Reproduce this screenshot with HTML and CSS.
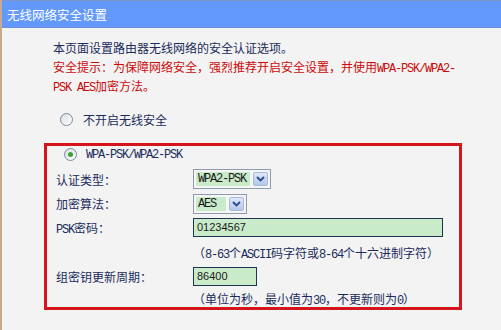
FILE: index.html
```html
<!DOCTYPE html>
<html lang="zh-CN">
<head>
    <meta charset="UTF-8">
    <title>无线网络安全设置</title>
    <link rel="stylesheet" href="styles.css">
</head>
<body>
    <div class="page">
        <div class="title-bar">无线网络安全设置</div>

        <div class="content">
            <p class="intro">本页面设置路由器无线网络的安全认证选项。</p>
            <p class="warning">安全提示：为保障网络安全，强烈推荐开启安全设置，并使用<span class="mono">WPA-PSK/WPA2-</span><br><span class="mono">PSK AES</span>加密方法。</p>

            <div class="option">
                <span class="radio"></span>
                <span>不开启无线安全</span>
            </div>

            <div class="secure-box">
                <div class="option option-wpa">
                    <span class="radio checked"></span>
                    <span class="mono">WPA-PSK/WPA2-PSK</span>
                </div>

                <div class="row">
                    <span class="label">认证类型：</span>
                    <div class="select">
                        <span class="select-value wide mono">WPA2-PSK</span>
                        <span class="select-arrow">
                            <svg width="9" height="6" viewBox="0 0 9 6"><path d="M1 1 L4.5 4.5 L8 1" fill="none" stroke="#2a4a8a" stroke-width="1.8"/></svg>
                        </span>
                    </div>
                </div>

                <div class="row">
                    <span class="label">加密算法：</span>
                    <div class="select">
                        <span class="select-value narrow mono">AES</span>
                        <span class="select-arrow">
                            <svg width="9" height="6" viewBox="0 0 9 6"><path d="M1 1 L4.5 4.5 L8 1" fill="none" stroke="#2a4a8a" stroke-width="1.8"/></svg>
                        </span>
                    </div>
                </div>

                <div class="row">
                    <span class="label"><span class="mono">PSK</span>密码：</span>
                    <div class="field field-long">01234567</div>
                </div>

                <div class="row hint-row">
                    <span class="hint">（<span class="mono">8-63</span>个<span class="mono">ASCII</span>码字符或<span class="mono">8-64</span>个十六进制字符）</span>
                </div>

                <div class="row">
                    <span class="label">组密钥更新周期：</span>
                    <div class="field field-short">86400</div>
                </div>

                <div class="row hint-row last">
                    <span class="hint">（单位为秒，最小值为<span class="mono">30</span>，不更新则为<span class="mono">0</span>）</span>
                </div>
            </div>
        </div>
    </div>
</body>
</html>
```

FILE: styles.css
```css
:root {
    --bar-color: #6399fd;
    --bg-color: #f3f3f3;
    --text-color: #1b2b5b;
    --warn-color: #cc0a0a;
    --box-color: #d4151c;
    --field-color: #c9ebc9;
}

* {
    box-sizing: border-box;
    margin: 0;
    padding: 0;
}

body {
    font-family: "Noto Sans CJK SC", sans-serif;
    font-size: 12px;
    color: var(--text-color);
    background-color: var(--bg-color);
}

.page {
    width: 501px;
    height: 330px;
    border-left: 2px solid #c9aa8c;
    overflow: hidden;
}

.title-bar {
    height: 28px;
    margin-left: -2px;
    padding-left: 7px;
    line-height: 27px;
    font-size: 12.5px;
    color: #ffffff;
    background-color: var(--bar-color);
    border-top: 1px solid #7f98c8;
    border-bottom: 1px solid #6a90d8;
}

.content {
    padding: 10px 0 0 51px;
}

.mono {
    font-family: "Liberation Mono", monospace;
    font-size: 12px;
    letter-spacing: -1.2px;
    line-height: 1;
}

.intro,
.warning {
    height: 19px;
    line-height: 19px;
}

.warning {
    height: 38px;
    color: var(--warn-color);
}

.option {
    display: flex;
    align-items: center;
    gap: 10px;
    height: 20px;
    margin: 14px 0 0 7px;
}

.radio {
    width: 13px;
    height: 13px;
    border: 1px solid #7d8a99;
    border-radius: 50%;
    background: linear-gradient(135deg, #d8dde3, #ffffff);
    display: flex;
    align-items: center;
    justify-content: center;
}

.radio.checked::after {
    content: "";
    width: 5px;
    height: 5px;
    border-radius: 50%;
    background-color: #36a336;
}

.secure-box {
    width: 418px;
    height: 167px;
    margin: 14px 0 0 -9px;
    border: 3px solid var(--box-color);
    padding-left: 9px;
}

.option-wpa {
    height: 15px;
    margin: 1px 0 5px 8px;
    gap: 9px;
}

.row {
    display: flex;
    align-items: center;
    height: 24.4px;
}

.row.last {
    height: 20px;
}

.label {
    width: 137px;
    flex-shrink: 0;
}

.hint-row {
    padding-left: 137px;
}

.select {
    display: flex;
    align-items: center;
    gap: 3px;
    height: 20px;
    padding: 2px;
    border: 1px solid #8e9bad;
    background-color: #f6f6f6;
}

.select-value {
    height: 14px;
    line-height: 14px;
    padding-left: 2px;
    background-color: var(--field-color);
    color: #1a1a1a;
}

.select-value.wide {
    width: 54px;
}

.select-value.narrow {
    width: 30px;
}

.select-arrow {
    width: 15px;
    height: 14px;
    border: 1px solid #a8b8d8;
    border-radius: 2px;
    background: linear-gradient(#dde7f8, #b4c8ec);
    display: flex;
    align-items: center;
    justify-content: center;
}

.field {
    height: 19px;
    padding-left: 3px;
    line-height: 17px;
    font-family: "Liberation Sans", sans-serif;
    font-size: 11px;
    color: #1a1a1a;
    background-color: var(--field-color);
    border: 1px solid #1e3552;
}

.field-long {
    width: 250px;
}

.field-short {
    width: 64px;
}
```
